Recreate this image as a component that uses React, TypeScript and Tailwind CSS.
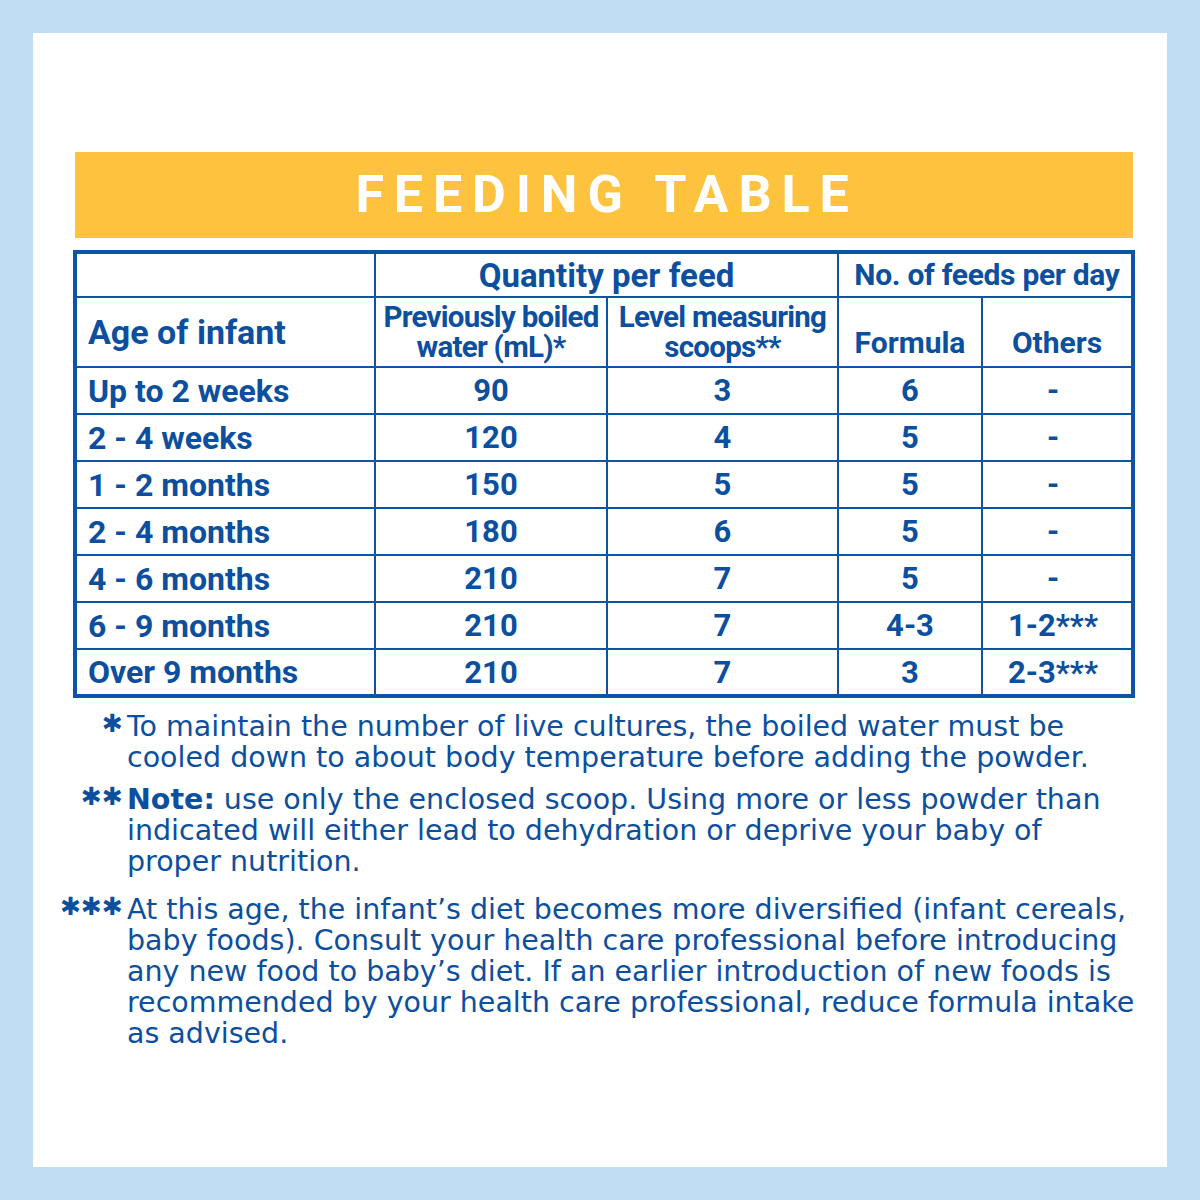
const rows = [
  { age: "Up to 2 weeks", water: "90", scoops: "3", formula: "6", others: "-" },
  { age: "2 - 4 weeks", water: "120", scoops: "4", formula: "5", others: "-" },
  { age: "1 - 2 months", water: "150", scoops: "5", formula: "5", others: "-" },
  { age: "2 - 4 months", water: "180", scoops: "6", formula: "5", others: "-" },
  { age: "4 - 6 months", water: "210", scoops: "7", formula: "5", others: "-" },
  { age: "6 - 9 months", water: "210", scoops: "7", formula: "4-3", others: "1-2***" },
  { age: "Over 9 months", water: "210", scoops: "7", formula: "3", others: "2-3***" },
];

const notes = [
  {
    mark: "\u2731",
    gap: "mt-0",
    lines: [
      "To maintain the number of live cultures, the boiled water must be",
      "cooled down to about body temperature before adding the powder.",
    ],
  },
  {
    mark: "\u2731\u2731",
    gap: "mt-[11px]",
    bold: "Note:",
    lines: [
      " use only the enclosed scoop. Using more or less powder than",
      "indicated will either lead to dehydration or deprive your baby of",
      "proper nutrition.",
    ],
  },
  {
    mark: "\u2731\u2731\u2731",
    gap: "mt-[17px]",
    lines: [
      "At this age, the infant\u2019s diet becomes more diversified (infant cereals,",
      "baby foods). Consult your health care professional before introducing",
      "any new food to baby\u2019s diet. If an earlier introduction of new foods is",
      "recommended by your health care professional, reduce formula intake",
      "as advised.",
    ],
  },
];

const cell = "border-2 border-[#0b55a6] p-0";

export default function App() {
  return (
    <div className="h-[1200px] w-[1200px] bg-[#c1ddf4] p-[33px] font-['Roboto',_'Liberation_Sans',_sans-serif] text-[#0b4f9e]">
      <div className="h-full w-full bg-white px-[40px] pt-[119px]">
        {/* Banner */}
        <div className="ml-[2px] mr-[-6px] flex h-[86px] items-center justify-center bg-[#fdc23e]">
          <h1 className="pl-[6px] text-[52px] font-bold tracking-[0.19em] text-white">FEEDING TABLE</h1>
        </div>

        {/* Table */}
        <table className="mt-[12px] w-[1058px] table-fixed border-collapse border-4 border-[#0b55a6] text-[31px] font-bold leading-none">
          <colgroup>
            <col className="w-[300px]" />
            <col className="w-[232px]" />
            <col className="w-[231px]" />
            <col className="w-[144px]" />
            <col className="w-[151px]" />
          </colgroup>
          <thead>
            <tr className="h-[45px]">
              <th className={cell}></th>
              <th colSpan={2} className={`${cell} text-center text-[33px]`}>
                Quantity per feed
              </th>
              <th colSpan={2} className={`${cell} pl-[4px] text-center text-[30px] tracking-[-0.01em]`}>
                No. of feeds per day
              </th>
            </tr>
            <tr className="h-[70px]">
              <th className={`${cell} pl-[11px] text-left text-[34px]`}>Age of infant</th>
              <th className={`${cell} text-center text-[29.5px] leading-[30px] tracking-[-0.025em]`}>
                Previously boiled
                <br />
                water (mL)*
              </th>
              <th className={`${cell} text-center text-[29.5px] leading-[30px] tracking-[-0.025em]`}>
                Level measuring
                <br />
                scoops**
              </th>
              <th className={`${cell} pt-[22px] text-center text-[30px]`}>Formula</th>
              <th className={`${cell} pt-[22px] text-center text-[30px]`}>Others</th>
            </tr>
          </thead>
          <tbody>
            {rows.map((r) => (
              <tr key={r.age} className="h-[47px]">
                <td className={`${cell} pl-[11px] text-left text-[32px]`}>{r.age}</td>
                <td className={`${cell} text-center`}>{r.water}</td>
                <td className={`${cell} text-center`}>{r.scoops}</td>
                <td className={`${cell} text-center`}>{r.formula}</td>
                <td className={`${cell} pr-[8px] text-center`}>{r.others}</td>
              </tr>
            ))}
          </tbody>
        </table>

        {/* Notes */}
        <div className="mt-[13px] flex flex-col font-['DejaVu_Sans',_sans-serif] text-[28.5px] leading-[31px]">
          {notes.map((n) => (
            <div key={n.mark} className={`flex ${n.gap}`}>
              <div className="flex w-[50px] shrink-0 justify-end">
                <span className="whitespace-nowrap text-[25px] leading-[26px]">{n.mark}</span>
              </div>
              <div className="ml-[4px] whitespace-nowrap">
                {n.lines.map((l, i) => (
                  <div key={i}>
                    {i === 0 && n.bold ? <span className="font-bold">{n.bold}</span> : null}
                    {l}
                  </div>
                ))}
              </div>
            </div>
          ))}
        </div>
      </div>
    </div>
  );
}
